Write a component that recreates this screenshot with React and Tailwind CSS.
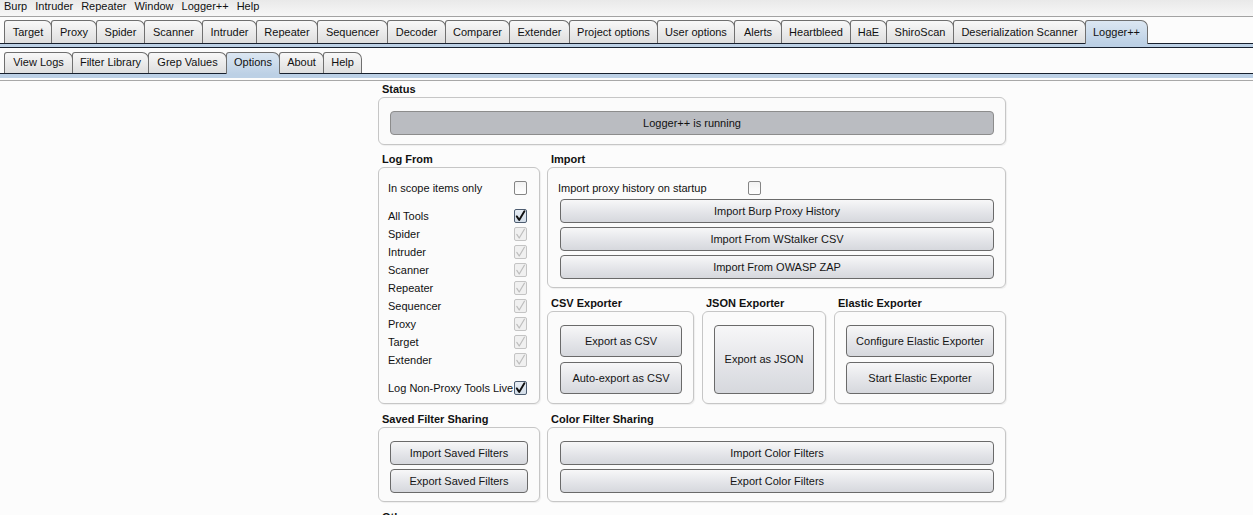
import React from "react";

const topTabs = [
  ["Target", 48], ["Proxy", 46], ["Spider", 49], ["Scanner", 59], ["Intruder", 55],
  ["Repeater", 62], ["Sequencer", 71], ["Decoder", 59], ["Comparer", 65], ["Extender", 61],
  ["Project options", 89], ["User options", 78], ["Alerts", 48], ["Heartbleed", 70],
  ["HaE", 37], ["ShiroScan", 68], ["Deserialization Scanner", 133], ["Logger++", 63],
];
const subTabs = [
  ["View Logs", 69], ["Filter Library", 77], ["Grep Values", 79], ["Options", 54], ["About", 45], ["Help", 39],
];

function Tab({ label, width, selected, first, tall }) {
  const base =
    "flex items-center justify-center whitespace-nowrap border-x border-t border-[#6f6f6f] rounded-tl-[3px] rounded-tr-[7px] ";
  const h = tall ? (selected ? "h-[24px] mb-[-1px]" : "h-[23px]") : selected ? "h-[22px] mb-[-1px]" : "h-[21px]";
  const bg = selected
    ? "relative z-10 bg-[linear-gradient(to_bottom,#dce7f2,#bcd0e5)]"
    : "bg-[linear-gradient(to_bottom,#f8f8f8,#dedede)]";
  const pad = tall ? (selected ? "pb-px" : "") : selected ? "pb-[2px]" : "pb-px";
  return (
    <div
      className={base + h + " " + bg + (first ? "" : " -ml-px")}
      style={{ width }}
    >
      <span className={pad}>{label}</span>
    </div>
  );
}

function Section({ title, className = "", boxClass = "", children }) {
  return (
    <div className={className}>
      <div className="h-[15px] leading-[15px] pl-[4px] font-bold whitespace-nowrap">{title}</div>
      <div
        className={
          "rounded-[6px] border border-[#c6c6c6] bg-[#fbfbfb] shadow-[1px_1px_1px_rgba(0,0,0,0.06)] " + boxClass
        }
      >
        {children}
      </div>
    </div>
  );
}

function Btn({ children, className = "" }) {
  return (
    <div
      className={
        "flex items-center justify-center whitespace-nowrap rounded-[4px] border border-[#6a6a6a] bg-[linear-gradient(to_bottom,#f7f7f8,#e4e5e9_55%,#d6d8dd)] text-[#151515] " +
        className
      }
    >
      {children}
    </div>
  );
}

function Check({ checked, disabled }) {
  let cls = "w-[13px] h-[14px] shrink-0 rounded-[2px] border flex items-center justify-center ";
  if (disabled) cls += "border-[#c4c4c4] bg-[#f0f0f0]";
  else if (checked) cls += "border-[#4d5c70] bg-[linear-gradient(to_bottom,#e7edf4,#d3dde8)]";
  else cls += "border-[#858585] bg-[linear-gradient(to_bottom,#f2f2f2,#ffffff)]";
  return (
    <div className={cls}>
      {checked && (
        <svg width="11" height="12" viewBox="0 0 11 12">
          <path
            d="M1.8 6.4 L4.2 10 L9.4 1.2"
            fill="none"
            stroke={disabled ? "#bdbdbd" : "#111"}
            strokeWidth={disabled ? 1.2 : 1.9}
            strokeLinecap="round"
            strokeLinejoin="round"
          />
        </svg>
      )}
    </div>
  );
}

function Row({ label, checked, disabled }) {
  return (
    <div className="h-[18px] flex items-center justify-between whitespace-nowrap">
      <span>{label}</span>
      <Check checked={checked} disabled={disabled} />
    </div>
  );
}

export default function App() {
  const tools = ["Spider", "Intruder", "Scanner", "Repeater", "Sequencer", "Proxy", "Target", "Extender"];
  return (
    <div className="w-[1253px] h-[515px] overflow-hidden bg-[#fcfcfc] text-[11px] text-[#111] font-['Liberation_Sans',Arial,sans-serif]">
      {/* Menu bar */}
      <div className="h-[17px] border-b border-[#a3a3a3] bg-[linear-gradient(to_bottom,#e9e9e9,#f7f7f7)] flex items-start pl-[4px] gap-[8px] leading-[12px]">
        {["Burp", "Intruder", "Repeater", "Window", "Logger++", "Help"].map((m) => (
          <span key={m}>{m}</span>
        ))}
      </div>

      {/* Top tabs */}
      <div className="flex items-end pl-[4px] pt-[3px]">
        {topTabs.map(([l, w], i) => (
          <Tab key={l} label={l} width={w} first={i === 0} tall selected={l === "Logger++"} />
        ))}
      </div>
      <div className="h-[5px] border-y border-[#17202e] bg-[#bcd0e5]" />

      {/* Sub tabs */}
      <div className="flex items-end pl-[4px] pt-[4px]">
        {subTabs.map(([l, w], i) => (
          <Tab key={l} label={l} width={w} first={i === 0} selected={l === "Options"} />
        ))}
      </div>
      <div className="h-[5px] border-t border-[#17202e] bg-[#bcd0e5]" />
      <div className="h-[2px]" />

      {/* Content */}
      <div className="border-t border-[#a8a8a8] pt-[1px]">
        <div className="ml-[378px] w-[628px] flex flex-col">
          <Section title="Status" boxClass="pt-[13px] pb-[9px] px-[11px]">
            <div className="h-[24px] rounded-[4px] border border-[#8c8c8c] bg-[#babcc1] flex items-center justify-center">
              Logger++ is running
            </div>
          </Section>

          <div className="mt-[7px] flex gap-[7px]">
            <Section title="Log From" className="w-[162px]" boxClass="h-[237px] pt-[11px] pl-[9px] pr-[12px]">
              <Row label="In scope items only" />
              <div className="h-[10px]" />
              <Row label="All Tools" checked />
              {tools.map((t) => (
                <Row key={t} label={t} checked disabled />
              ))}
              <div className="h-[10px]" />
              <Row label="Log Non-Proxy Tools Live" checked />
            </Section>

            <div className="w-[459px] flex flex-col">
              <Section title="Import" boxClass="pt-[11px] pb-[8px] pl-[10px] pr-[11px]">
                <div className="h-[18px] flex items-center gap-[41px] whitespace-nowrap">
                  <span>Import proxy history on startup</span>
                  <Check />
                </div>
                <div className="mt-[2px] pl-[2px] flex flex-col gap-[4px]">
                  <Btn className="h-[24px]">Import Burp Proxy History</Btn>
                  <Btn className="h-[24px]">Import From WStalker CSV</Btn>
                  <Btn className="h-[24px]">Import From OWASP ZAP</Btn>
                </div>
              </Section>

              <div className="mt-[8px] flex gap-[8px]">
                <Section title="CSV Exporter" className="w-[147px]" boxClass="h-[93px] pt-[13px] pl-[12px] pr-[11px] flex flex-col gap-[5px]">
                  <Btn className="h-[32px]">Export as CSV</Btn>
                  <Btn className="h-[32px]">Auto-export as CSV</Btn>
                </Section>
                <Section title="JSON Exporter" className="w-[124px]" boxClass="h-[93px] pt-[13px] px-[11px]">
                  <Btn className="h-[69px]">Export as JSON</Btn>
                </Section>
                <Section title="Elastic Exporter" className="w-[172px]" boxClass="h-[93px] pt-[13px] pl-[11px] pr-[11px] flex flex-col gap-[5px]">
                  <Btn className="h-[32px]">Configure Elastic Exporter</Btn>
                  <Btn className="h-[32px]">Start Elastic Exporter</Btn>
                </Section>
              </div>
            </div>
          </div>

          <div className="mt-[8px] flex gap-[7px]">
            <Section title="Saved Filter Sharing" className="w-[162px]" boxClass="pt-[13px] pb-[8px] px-[11px] flex flex-col gap-[4px]">
              <Btn className="h-[24px]">Import Saved Filters</Btn>
              <Btn className="h-[24px]">Export Saved Filters</Btn>
            </Section>
            <Section title="Color Filter Sharing" className="w-[459px]" boxClass="pt-[13px] pb-[8px] pl-[12px] pr-[11px] flex flex-col gap-[4px]">
              <Btn className="h-[24px]">Import Color Filters</Btn>
              <Btn className="h-[24px]">Export Color Filters</Btn>
            </Section>
          </div>

          <Section title="Other" className="mt-[8px]" boxClass="h-[80px]">
            <div />
          </Section>
        </div>
      </div>
    </div>
  );
}
